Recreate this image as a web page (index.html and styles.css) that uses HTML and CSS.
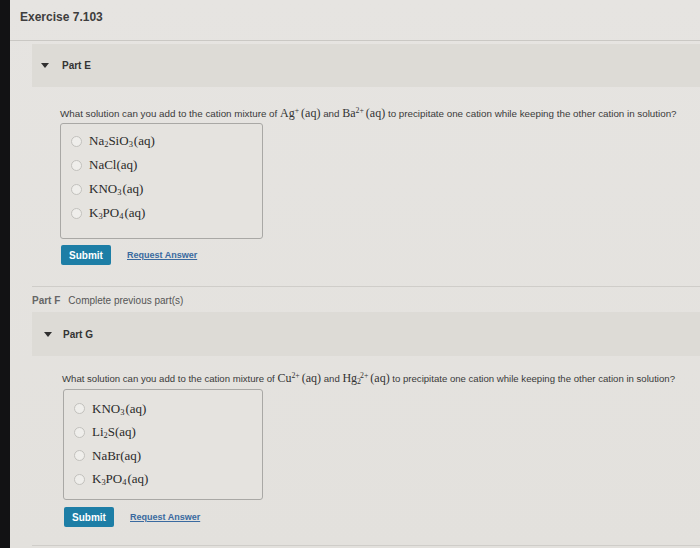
FILE: index.html
```html
<!DOCTYPE html>
<html>
<head>
<meta charset="utf-8">
<link rel="stylesheet" href="styles.css">
</head>
<body>
<div class="screen">
  <div class="bezel"></div>
  <div class="main">
    <div class="title">Exercise 7.103</div>

    <div class="part">
      <div class="part-head"><span class="tri"></span><span class="part-name">Part E</span></div>
      <div class="part-body">
        <p class="question">What solution can you add to the cation mixture of <span class="m">Ag<sup>+</sup><span class="aq">(aq)</span></span> and <span class="m">Ba<sup>2+</sup><span class="aq">(aq)</span></span> to precipitate one cation while keeping the other cation in solution?</p>
        <div class="options">
          <div class="opt"><span class="radio"></span><span class="m">Na<sub>2</sub>SiO<sub>3</sub><span class="aq">(aq)</span></span></div>
          <div class="opt"><span class="radio"></span><span class="m">NaCl(aq)</span></div>
          <div class="opt"><span class="radio"></span><span class="m">KNO<sub>3</sub><span class="aq">(aq)</span></span></div>
          <div class="opt"><span class="radio"></span><span class="m">K<sub>3</sub>PO<sub>4</sub><span class="aq">(aq)</span></span></div>
        </div>
        <div class="actions">
          <span class="submit">Submit</span>
          <a class="request">Request Answer</a>
        </div>
      </div>
    </div>

    <div class="part-f">
      <span class="pf-name">Part F</span><span class="pf-note">Complete previous part(s)</span>
    </div>

    <div class="part part-g">
      <div class="part-head"><span class="tri"></span><span class="part-name">Part G</span></div>
      <div class="part-body">
        <p class="question q-g">What solution can you add to the cation mixture of <span class="m">Cu<sup>2+</sup><span class="aq">(aq)</span></span> and <span class="m">Hg<sub>2</sub><sup class="sp">2+</sup><span class="aq">(aq)</span></span> to precipitate one cation while keeping the other cation in solution?</p>
        <div class="options options-g">
          <div class="opt"><span class="radio"></span><span class="m">KNO<sub>3</sub><span class="aq">(aq)</span></span></div>
          <div class="opt"><span class="radio"></span><span class="m">Li<sub>2</sub>S(aq)</span></div>
          <div class="opt"><span class="radio"></span><span class="m">NaBr(aq)</span></div>
          <div class="opt"><span class="radio"></span><span class="m">K<sub>3</sub>PO<sub>4</sub><span class="aq">(aq)</span></span></div>
        </div>
        <div class="actions">
          <span class="submit">Submit</span>
          <a class="request">Request Answer</a>
        </div>
      </div>
    </div>
  </div>
</div>
</body>
</html>
```

FILE: styles.css
```css
html, body {
  margin: 0;
  padding: 0;
  width: 700px;
  height: 548px;
  overflow: hidden;
  background: #e4e2de;
  font-family: "Liberation Sans", Arial, sans-serif;
}
.screen {
  display: flex;
  height: 548px;
}
.bezel {
  width: 10px;
  flex: none;
  background: #121214;
}
.main {
  flex: 1;
  background: linear-gradient(180deg, #e6e4e1 0%, #e3e1dd 100%);
}
.title {
  height: 41px;
  box-sizing: border-box;
  padding: 10px 0 0 10px;
  font-size: 12px;
  font-weight: bold;
  color: #3e3d3d;
  border-bottom: 1px solid #cac8c4;
}
.part {
  margin-left: 22px;
  margin-top: 3px;
}
.part-head {
  height: 43px;
  background: #dddbd6;
  display: flex;
  align-items: center;
  padding-left: 9px;
  gap: 13px;
}
.tri {
  width: 0;
  height: 0;
  border-left: 4px solid transparent;
  border-right: 4px solid transparent;
  border-top: 5px solid #2f2f2f;
}
.part-name {
  font-size: 10px;
  font-weight: bold;
  color: #333;
}
.part-body {
  padding: 19px 0 0 28px;
}
.question {
  margin: 0;
  font-size: 9.8px;
  color: #3a3a3a;
  line-height: 14px;
  white-space: nowrap;
}
.q-g {
  font-size: 9.6px;
}
.m {
  font-family: "Liberation Serif", "Times New Roman", serif;
  font-size: 12px;
  color: #333;
}
.question .m {
  font-size: 12px;
}
.aq {
  margin-left: 2px;
}
.opt .aq {
  margin-left: 1px;
}
sup, sub {
  font-size: 65%;
  line-height: 0;
  position: relative;
  vertical-align: baseline;
}
sup { top: -0.55em; }
sub { top: 0.25em; }
.sp { margin-left: -1px; }
.options {
  margin-top: 2px;
  width: 203px;
  box-sizing: border-box;
  border: 1px solid #a9a8a5;
  border-radius: 3px;
  background: #e5e3df;
  padding: 5px 0 13px 10px;
}
.opt {
  height: 24px;
  display: flex;
  align-items: center;
  gap: 7px;
}
.opt .m {
  font-size: 13px;
  color: #2a2a2a;
}
.radio {
  width: 9px;
  height: 9px;
  border-radius: 50%;
  border: 1px solid #c2c1bd;
  background: #efeeeb;
  flex: none;
}
.actions {
  display: flex;
  align-items: center;
  margin-top: 6px;
  margin-left: 1px;
  gap: 16px;
}
.submit {
  width: 50px;
  height: 20px;
  background: #1d7ea6;
  border-radius: 2px;
  color: #fff;
  font-size: 10px;
  font-weight: bold;
  display: flex;
  align-items: center;
  justify-content: center;
}
.request {
  font-size: 9px;
  font-weight: bold;
  color: #3a6aa0;
  text-decoration: underline;
}
.part-f {
  margin: 21px 0 0 22px;
  border-top: 1px solid #cfcdc9;
  height: 24px;
  display: flex;
  align-items: center;
  padding-top: 1px;
  gap: 8px;
}
.pf-name {
  font-size: 10px;
  font-weight: bold;
  color: #666;
}
.pf-note {
  font-size: 10px;
  color: #555;
}
.part-g {
  margin-top: 0;
}
.part-g .part-head {
  height: 44px;
  padding-left: 12px;
  gap: 11px;
}
.part-g .part-body {
  padding: 15px 0 0 30px;
  border-bottom: 1px solid #cfcdc9;
  height: 190px;
  box-sizing: border-box;
}
.options-g {
  margin-top: 3px;
  margin-left: 1px;
  width: 200px;
  padding: 7px 0 8px 10px;
  height: 111px;
}
.options-g .opt { height: 23.5px; }
.part-g .actions {
  margin-top: 7px;
  margin-left: 2px;
}
```
